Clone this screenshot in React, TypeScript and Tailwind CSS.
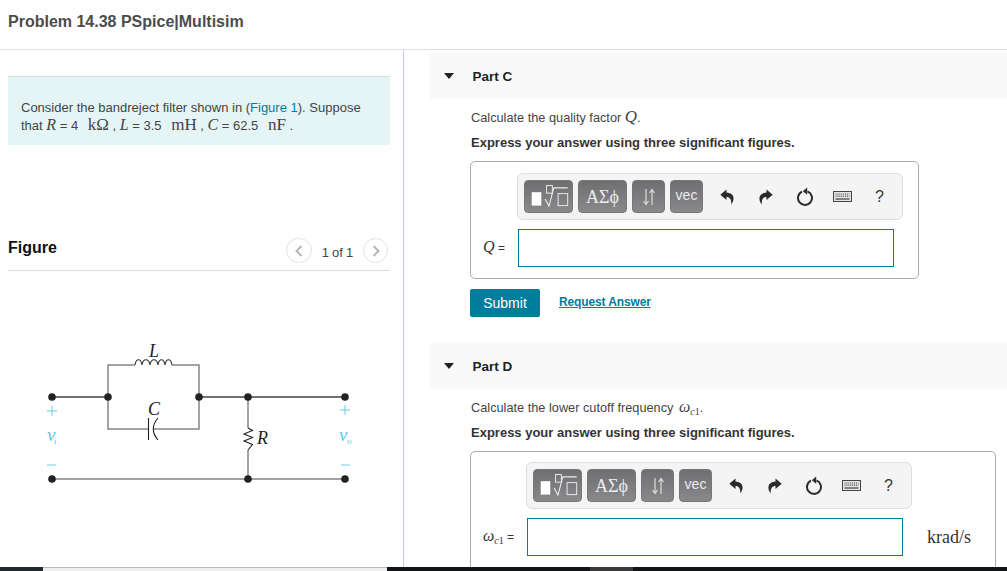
import type { ReactNode } from "react";

const serif = "font-['Liberation_Serif',serif] leading-none";

function TemplateIcon() {
  return (
    <svg width="49" height="33" viewBox="0 0 49 33" fill="none">
      <rect x="7" y="12" width="10" height="14" fill="#fff" />
      <rect x="22.5" y="5" width="6" height="8" stroke="#ececec" strokeWidth="1" />
      <path d="M21 19 L25 26.5 L30 7.5 H44.5" stroke="#ececec" strokeWidth="1.1" />
      <rect x="34.5" y="13.5" width="10" height="12.5" stroke="#ececec" strokeWidth="1" />
    </svg>
  );
}

function ArrowsIcon() {
  return (
    <svg width="14" height="18" viewBox="0 0 14 18" fill="none" stroke="#dcdcdc" strokeWidth="1.2">
      <path d="M4 1 V16 M1.5 13 L4 16.5 L6.5 13" />
      <path d="M10 17 V2 M7.5 5 L10 1.5 L12.5 5" />
    </svg>
  );
}

function ToolButton({ w, children }: { w: string; children: ReactNode }) {
  return (
    <div
      className={`${w} flex h-[33px] items-center justify-center rounded-[4px] border border-[#777779] bg-gradient-to-b from-[#6f6f72] to-[#89898c] text-[#ececec]`}
    >
      {children}
    </div>
  );
}

function Undo({ flip }: { flip?: boolean }) {
  return (
    <svg width="15" height="16" viewBox="0 0 15 16" className={flip ? "-scale-x-100" : ""}>
      <path d="M6.5 0.5 L0.3 5.8 L6.5 11 V8 C10 8 11.3 10 11.4 15.5 C14.8 11 15 4 6.5 3.6 Z" fill="#2b2b2b" />
    </svg>
  );
}

function Reload() {
  return (
    <svg width="18" height="19" viewBox="0 0 18 19" fill="none">
      <path d="M6 4.6 A7 7 0 1 0 11.5 4.4" stroke="#2b2b2b" strokeWidth="2" />
      <path d="M11.2 0.5 L11.2 7.8 L6.8 4.3 Z" fill="#2b2b2b" />
    </svg>
  );
}

function KeyboardIcon() {
  return (
    <svg width="19" height="11" viewBox="0 0 19 11" fill="none">
      <rect x="0.5" y="0.5" width="18" height="10" fill="#e6e6e6" stroke="#444" />
      <path d="M2.5 3 H16.5 M2.5 5.2 H16.5" stroke="#555" strokeWidth="1.2" strokeDasharray="1.1 0.8" />
      <path d="M2.5 8 H16.5" stroke="#555" strokeWidth="1.4" />
    </svg>
  );
}

function Toolbar() {
  return (
    <div className="flex h-[47px] w-[386px] items-center rounded-[6px] border border-[#dedede] bg-[#f4f4f5] pl-[6px]">
      <div className="flex gap-[5px]">
        <ToolButton w="w-[49px]">
          <TemplateIcon />
        </ToolButton>
        <ToolButton w="w-[49px]">
          <span className={`${serif} text-[18px]`}>ΑΣϕ</span>
        </ToolButton>
        <ToolButton w="w-[33px]">
          <ArrowsIcon />
        </ToolButton>
        <ToolButton w="w-[33px]">
          <span className="mb-[3px] text-[14px]">vec</span>
        </ToolButton>
      </div>
      <div className="ml-[17px] flex items-center">
        <div className="flex w-[38px] justify-start"><Undo /></div>
        <div className="flex w-[38px] justify-start"><Undo flip /></div>
        <div className="flex w-[37px] justify-start"><Reload /></div>
        <div className="flex w-[35px] justify-start"><KeyboardIcon /></div>
        <span className="ml-[7px] text-[16px] text-[#333]">?</span>
      </div>
    </div>
  );
}

function PartBar({ title }: { title: string }) {
  return (
    <div className="flex h-[46px] items-center bg-[#f9f9f9] pl-[14px]">
      <span className="h-0 w-0 border-x-[5.5px] border-t-[6px] border-x-transparent border-t-[#222]" />
      <span className="ml-[18.5px] mt-[2px] text-[13.5px] font-bold text-[#222]">{title}</span>
    </div>
  );
}

function AnswerBox({
  label,
  unit,
  boxClass,
  indent,
  labelWidth,
  toolbarTop,
}: {
  label: ReactNode;
  unit?: string;
  boxClass: string;
  indent: string;
  labelWidth: string;
  toolbarTop: string;
}) {
  return (
    <div className={`${boxClass} rounded-[5px] border border-[#ababab] bg-white`}>
      <div className={`${indent} ${toolbarTop}`}>
        <Toolbar />
      </div>
      <div className="mt-[9px] flex items-center">
        <div className={`${labelWidth} flex justify-end pr-[13px] text-[12px] text-[#333]`}>{label}</div>
        <div className="h-[38px] w-[376px] border border-[#007c9c] bg-white" />
        {unit ? <span className={`${serif} ml-[24px] text-[18px] text-[#333]`}>{unit}</span> : null}
      </div>
    </div>
  );
}

function Circuit() {
  return (
    <svg viewBox="8 330 382 190" className="h-[190px] w-[382px]" fill="none">
      <g stroke="#858585" strokeWidth="1.5">
        <path d="M135 365 H108 V429 H148 M153 429 H199 V365 H172" />
        <path d="M248 397 V428 M248 450 V479" />
        <path d="M52 479 H345" />
      </g>
      <path d="M52 397 H108 M199 397 H345" stroke="#444" strokeWidth="1.3" />
      <path
        d="M135 365 C136 358 141 358 142 365 C143 358 149 358 150 365 C151 358 157 358 158 365 C159 358 164 358 165 365 C166 358 171 358 172 365"
        stroke="#333"
        strokeWidth="1.1"
      />
      <path d="M148.5 418 V440 M158 418 C152 425 152 433 158 440" stroke="#222" strokeWidth="1.1" />
      <path d="M248 428 L252.5 430.5 L244 434 L252.5 437.5 L244 441 L252.5 444.5 L248 450" stroke="#222" strokeWidth="1.1" />
      {[
        [52, 397],
        [108, 397],
        [199, 397],
        [248, 397],
        [345, 397],
        [52, 479],
        [248, 479],
        [345, 479],
      ].map(([cx, cy]) => (
        <circle key={`${cx}-${cy}`} cx={cx} cy={cy} r="3.8" fill="#222" />
      ))}
      <g fontFamily="Liberation Serif, serif" fontStyle="italic" fontSize="18" fill="#222">
        <text x="149" y="357">L</text>
        <text x="148" y="415">C</text>
        <text x="257" y="444">R</text>
      </g>
      <g stroke="#5ec5e8" strokeWidth="0.9">
        <path d="M47 411 H57 M52 406 V416 M47 465 H56" />
        <path d="M340 410 H350 M345 405 V415 M341 465 H350" />
      </g>
      <g fontFamily="Liberation Serif, serif" fontStyle="italic" fill="#5ec5e8">
        <text x="47" y="441" fontSize="19">v</text>
        <text x="54" y="444" fontSize="9">i</text>
        <text x="339" y="441" fontSize="19">v</text>
        <text x="347" y="444" fontSize="9">o</text>
      </g>
    </svg>
  );
}

export default function App() {
  return (
    <div className="flex h-[571px] w-[1007px] flex-col overflow-hidden bg-white font-['Liberation_Sans',Arial,sans-serif] text-[#333]">
      <header className="h-[50px] shrink-0 border-b border-[#dcdfe2] pl-2 pt-[12px]">
        <h1 className="text-[16px] leading-[20px] font-bold text-[#4c4c4c]">Problem 14.38 PSpice|Multisim</h1>
      </header>

      <div className="flex min-h-0 flex-1">
        <aside className="w-[404px] shrink-0 border-r border-[#c3ccd6] pl-2">
          <div className="mt-[26px] h-[69px] w-[382px] border-t border-[#d5dedf] bg-[#e5f5f6] pl-[13px] pt-[23px] text-[13px] leading-[16px] text-[#444]">
            <p>
              Consider the bandreject filter shown in (<span className="text-[#007c9c]">Figure 1</span>). Suppose
            </p>
            <p>
              that <i className={`${serif} text-[16px]`}>R</i> = 4 <span className={`${serif} ml-[6px] text-[17px]`}>kΩ</span> ,{" "}
              <i className={`${serif} text-[16px]`}>L</i> = 3.5 <span className={`${serif} ml-[6px] text-[17px]`}>mH</span> ,{" "}
              <i className={`${serif} text-[16px]`}>C</i> = 62.5 <span className={`${serif} ml-[6px] text-[17px]`}>nF</span> .
            </p>
          </div>

          <div className="mt-[88px] flex h-[38px] w-[382px] items-start justify-between border-b border-[#dcdcdc] pr-[2px]">
            <h2 className="mt-[1px] text-[16px] leading-[28px] font-bold text-[#111]">Figure</h2>
            <div className="mt-[5px] flex items-center text-[#444]">
              <span className="flex h-[25px] w-[26px] items-center justify-center rounded-full border border-[#e2e2e2] text-[#b5b5b5]">
                <svg width="8" height="12" viewBox="0 0 8 12" fill="none" stroke="currentColor" strokeWidth="2"><path d="M6.5 1 L1.5 6 L6.5 11" /></svg>
              </span>
              <span className="mx-[10px] pt-[5px] text-[13px] tracking-[-0.2px]">1 of 1</span>
              <span className="flex h-[25px] w-[25px] items-center justify-center rounded-full border border-[#e2e2e2] text-[#b5b5b5]">
                <svg width="8" height="12" viewBox="0 0 8 12" fill="none" stroke="currentColor" strokeWidth="2"><path d="M1.5 1 L6.5 6 L1.5 11" /></svg>
              </span>
            </div>
          </div>

          <div className="mt-[59px]">
            <Circuit />
          </div>
        </aside>

        <main className="min-w-0 flex-1 pl-[26px] pt-[3px]">
          <PartBar title="Part C" />
          <div className="pl-[41px]">
            <p className="mt-[9px] text-[12.75px] leading-[20px] text-[#444]">
              Calculate the quality factor <i className={`${serif} text-[17px]`}>Q</i>.
            </p>
            <p className="mt-[5px] text-[13px] leading-[20px] font-bold text-[#333]">
              Express your answer using three significant figures.
            </p>
            <div className="-ml-px mt-[8px]">
              <AnswerBox
                label={
                  <span>
                    <i className={`${serif} text-[16px]`}>Q</i> =
                  </span>
                }
                boxClass="h-[118px] w-[449px]"
                indent="pl-[46px]"
                labelWidth="w-[47px]"
                toolbarTop="pt-[11px]"
              />
            </div>
            <div className="-ml-px mt-[10px] flex items-center">
              <button className="h-[28px] w-[70px] rounded-[2px] bg-[#007c9c] text-[14px] text-white">Submit</button>
              <a className="mb-[3px] ml-[19px] text-[12px] font-bold tracking-[-0.13px] text-[#007c9c] underline">Request Answer</a>
            </div>
          </div>

          <div className="mt-[26px]">
            <PartBar title="Part D" />
          </div>
          <div className="pl-[41px]">
            <p className="mt-[9px] text-[12.75px] leading-[20px] text-[#444]">
              Calculate the lower cutoff frequency <i className={`${serif} ml-[2px] text-[16px]`}>ω</i>
              <sub className={`${serif} text-[10px]`}>
                <i>c</i>1
              </sub>
              .
            </p>
            <p className="mt-[5px] text-[13px] leading-[20px] font-bold text-[#333]">
              Express your answer using three significant figures.
            </p>
            <div className="-ml-px mt-[8px]">
              <AnswerBox
                label={
                  <span>
                    <i className={`${serif} text-[16px]`}>ω</i>
                    <sub className={`${serif} text-[10px]`}>
                      <i>c</i>1
                    </sub>{" "}
                    =
                  </span>
                }
                unit="krad/s"
                boxClass="h-[130px] w-[526px]"
                indent="pl-[55px]"
                labelWidth="w-[56px]"
                toolbarTop="pt-[10px]"
              />
            </div>
          </div>
        </main>
      </div>

      <div className="flex h-[4px] shrink-0 bg-[#111316]">
        <div className="w-[43px] bg-[#1f2a2e]" />
        <div className="w-[344px] border-t border-[#b9b9b9] bg-[#efefef]" />
        <div className="w-[203px]" />
        <div className="w-[43px] bg-[#3a3a3a]" />
      </div>
    </div>
  );
}
